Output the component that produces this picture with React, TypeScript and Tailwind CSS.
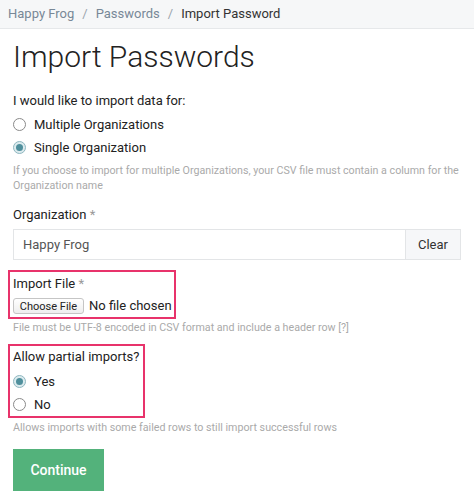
import { type JSX } from 'react';

function Radio({ checked, label }: { readonly checked?: boolean; readonly label: string }): JSX.Element {
  return (
    <label className="flex h-[23px] items-center gap-[8px] whitespace-nowrap text-[13px] text-[#222]">
      <span
        className={`flex h-[13px] w-[13px] items-center justify-center rounded-full border ${
          checked ? 'border-[#8fb7c0] bg-[#dcebee]' : 'border-[#8a8a8a] bg-white'
        }`}
      >
        {checked && <span className="h-[7px] w-[7px] rounded-full bg-[#4f8f9c]" />}
      </span>
      {label}
    </label>
  );
}

export default function App(): JSX.Element {
  return (
    <div className="h-[501px] w-[474px] overflow-hidden bg-white font-['Roboto',sans-serif] text-[#222]">
      <nav className="flex h-[29px] items-center gap-[8px] border-b border-[#e6e8ea] bg-[#f6f7f8] px-[8px] text-[13px]">
        <span className="text-[#788897]">Happy Frog</span>
        <span className="text-[#9aa4ad]">/</span>
        <span className="text-[#788897]">Passwords</span>
        <span className="text-[#9aa4ad]">/</span>
        <span className="text-[#333]">Import Password</span>
      </nav>

      <main className="px-[13px]">
        <h1 className="mt-[10px] text-[30px] leading-[36px] font-light text-[#222]">Import Passwords</h1>

        <p className="mt-[17px] text-[13px] leading-[18px]">I would like to import data for:</p>
        <div className="mt-[3px] flex flex-col">
          <Radio label="Multiple Organizations" />
          <Radio checked label="Single Organization" />
        </div>
        <p className="mt-[4px] text-[10.7px] leading-[15px] text-[#aaa]">
          If you choose to import for multiple Organizations, your CSV file must contain a column for the
          Organization name
        </p>

        <p className="mt-[13px] text-[13px] leading-[18px]">
          Organization <span className="text-[#999]">*</span>
        </p>
        <div className="mt-[5px] flex h-[31px] border border-[#e3e5e7]">
          <div className="flex flex-1 items-center px-[9px] text-[13px] text-[#555]">Happy Frog</div>
          <button
            type="button"
            className="w-[55px] border-l border-[#e3e5e7] bg-[#f6f7f9] text-[13px] text-[#333]"
          >
            Clear
          </button>
        </div>

        <div className="mt-[10px] -ml-[5px] w-fit border-2 border-[#e8336b] pt-[3px] pr-[2px] pb-[3px] pl-[3px]">
          <p className="whitespace-nowrap text-[13px] leading-[18px]">
            Import File <span className="text-[#999]">*</span>
          </p>
          <div className="mt-[5px] flex items-center gap-[5px] whitespace-nowrap">
            <button
              type="button"
              className="h-[16px] w-[71px] rounded-[3px] border border-[#c5c5c5] bg-gradient-to-b from-white to-[#eeeeee] text-[11px] leading-none text-[#222]"
            >
              Choose File
            </button>
            <span className="text-[13px] leading-[16px]">No file chosen</span>
          </div>
        </div>
        <p className="mt-[1px] text-[10.7px] leading-[15px] text-[#aaa]">
          File must be UTF-8 encoded in CSV format and include a header row [?]
        </p>

        <div className="mt-[9px] -ml-[5px] w-fit border-2 border-[#e8336b] pt-[2px] pr-[4px] pl-[3px]">
          <p className="whitespace-nowrap text-[13px] leading-[18px]">Allow partial imports?</p>
          <div className="mt-[4px] flex flex-col">
            <Radio checked label="Yes" />
            <Radio label="No" />
          </div>
        </div>
        <p className="mt-[2px] text-[10.7px] leading-[15px] text-[#aaa]">
          Allows imports with some failed rows to still import successful rows
        </p>

        <button
          type="button"
          className="mt-[14px] h-[42px] w-[91px] bg-[#53b27b] text-[14px] font-medium text-white"
        >
          Continue
        </button>
      </main>
    </div>
  );
}
